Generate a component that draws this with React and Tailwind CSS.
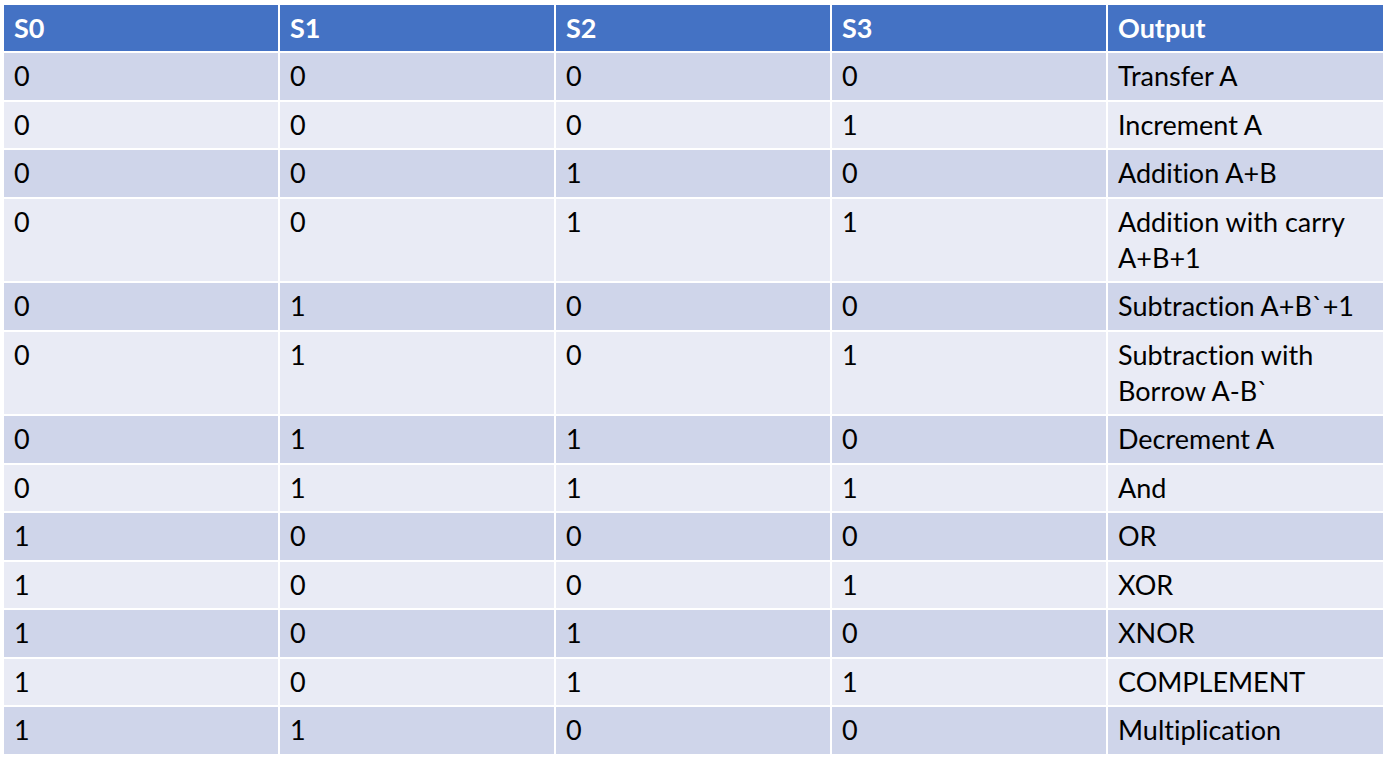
const rows = [
  ['0', '0', '0', '0', 'Transfer A'],
  ['0', '0', '0', '1', 'Increment A'],
  ['0', '0', '1', '0', 'Addition A+B'],
  ['0', '0', '1', '1', 'Addition with carry A+B+1'],
  ['0', '1', '0', '0', 'Subtraction A+B`+1'],
  ['0', '1', '0', '1', 'Subtraction with Borrow A-B`'],
  ['0', '1', '1', '0', 'Decrement A'],
  ['0', '1', '1', '1', 'And'],
  ['1', '0', '0', '0', 'OR'],
  ['1', '0', '0', '1', 'XOR'],
  ['1', '0', '1', '0', 'XNOR'],
  ['1', '0', '1', '1', 'COMPLEMENT'],
  ['1', '1', '0', '0', 'Multiplication'],
]

const headers = ['S0', 'S1', 'S2', 'S3', 'Output']

export default function App() {
  return (
    <div
      className="w-[1386px] h-[763px] bg-white pt-[3px] pl-[2px] [font-variant-ligatures:none]"
      style={{ fontFamily: 'Lato, "Open Sans", sans-serif' }}
    >
      <table className="w-[1381px] table-fixed border-collapse text-[27px] leading-[36px] text-black">
        <colgroup>
          <col className="w-[276px]" />
          <col className="w-[276px]" />
          <col className="w-[276px]" />
          <col className="w-[276px]" />
          <col className="w-[277px]" />
        </colgroup>
        <thead>
          <tr className="bg-[#4472C4]">
            {headers.map((h) => (
              <th key={h} className="border-2 border-white text-left font-bold text-white pl-[10px] pt-[3px] pb-[4px] h-[48px]">
                {h}
              </th>
            ))}
          </tr>
        </thead>
        <tbody>
          {rows.map((r, i) => (
            <tr key={i} className={i % 2 === 0 ? 'bg-[#CFD5EA]' : 'bg-[#E9EBF5]'}>
              {r.map((c, j) => (
                <td key={j} className="border-2 border-white align-top pl-[10px] pr-[20px] pt-[5px] pb-[5.5px]">
                  {c}
                </td>
              ))}
            </tr>
          ))}
        </tbody>
      </table>
    </div>
  )
}
